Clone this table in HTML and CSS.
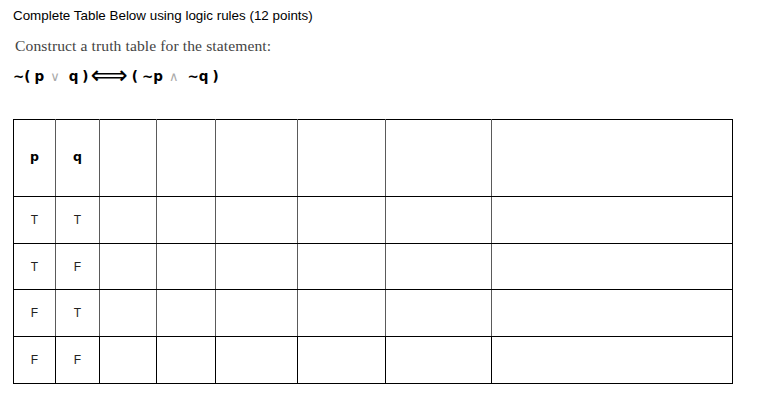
FILE: index.html
```html
<!DOCTYPE html>
<html>
<head>
<meta charset="utf-8">
<link rel="stylesheet" href="styles.css">
</head>
<body>
<div class="page">
  <p class="title">Complete Table Below using logic rules (12 points)</p>
  <p class="instr">Construct a truth table for the statement:</p>
  <p class="formula"><span>~(</span><span class="sp">p</span><span class="op">∨</span><span class="sp2">q</span><span class="sp">)</span><span class="arrow">⟺</span><span class="sp">(</span><span class="sp">~p</span><span class="op">∧</span><span class="sp2">~q</span><span class="sp">)</span></p>
  <table class="truth">
    <colgroup>
      <col style="width:42px"><col style="width:44px"><col style="width:57px"><col style="width:59px"><col style="width:82px"><col style="width:88px"><col style="width:106px"><col style="width:241px">
    </colgroup>
    <tr class="head"><th>p</th><th>q</th><td></td><td></td><td></td><td></td><td></td><td></td></tr>
    <tr class="r1"><th class="v">T</th><th class="v">T</th><td></td><td></td><td></td><td></td><td></td><td></td></tr>
    <tr class="r2"><th class="v">T</th><th class="v">F</th><td></td><td></td><td></td><td></td><td></td><td></td></tr>
    <tr class="r3"><th class="v">F</th><th class="v">T</th><td></td><td></td><td></td><td></td><td></td><td></td></tr>
    <tr class="r4 last"><th class="v">F</th><th class="v">F</th><td></td><td></td><td></td><td></td><td></td><td></td></tr>
  </table>
</div>
</body>
</html>
```
FILE: styles.css
```css
html, body { margin: 0; padding: 0; background: #fff; }
.page { padding: 7px 0 0 13px; }
p { margin: 0; }
.title {
  font-family: "Liberation Sans", Arial, sans-serif;
  font-size: 13.4px;
  line-height: 18px;
  color: #000;
}
.instr {
  margin-top: 12px;
  margin-left: 2px;
  font-family: "Liberation Serif", serif;
  font-size: 15.6px;
  line-height: 18px;
  color: #444;
  letter-spacing: 0.1px;
}
.formula {
  margin-top: 12px;
  height: 18px;
  font-family: "DejaVu Sans", sans-serif;
  font-weight: bold;
  font-size: 13.5px;
  line-height: 18px;
  color: #000;
  white-space: nowrap;
}
.formula .sp { margin-left: 4px; }
.formula .sp2 { margin-left: 9px; }
.formula .op { margin-left: 6px; color: #aaa; font-weight: normal; font-size: 13px; }
.formula .arrow { font-size: 26px; line-height: 10px; font-weight: normal; margin-left: 2px; vertical-align: -3px; }
.truth {
  margin-top: 34px;
  border-collapse: collapse;
  table-layout: fixed;
  width: 720px;
}
.truth th, .truth td {
  padding: 0;
  border-left: 1px solid #5a5a5a;
  border-right: 1px solid #5a5a5a;
  border-top: 1px solid #000;
  border-bottom: 1px solid #000;
  text-align: center;
  vertical-align: middle;
}
.truth tr > :first-child { border-left: 1px solid #000; }
.truth tr > :last-child { border-right: 1px solid #000; }
.truth .last th, .truth .last td { border-left: 1px solid #000; border-right: 1px solid #000; }
.truth .head th { font-family: "DejaVu Sans", sans-serif; font-size: 12.5px; font-weight: bold; padding-bottom: 3px; }
.truth .head td { padding-bottom: 3px; }
.truth th.v { font-family: "Liberation Sans", Arial, sans-serif; font-weight: normal; font-size: 12px; color: #222; }
.truth .head > * { height: 73px; }
.truth .r1 > * { height: 46px; }
.truth .r2 > * { height: 45px; }
.truth .r3 > * { height: 46px; }
.truth .r4 > * { height: 46px; }
```
